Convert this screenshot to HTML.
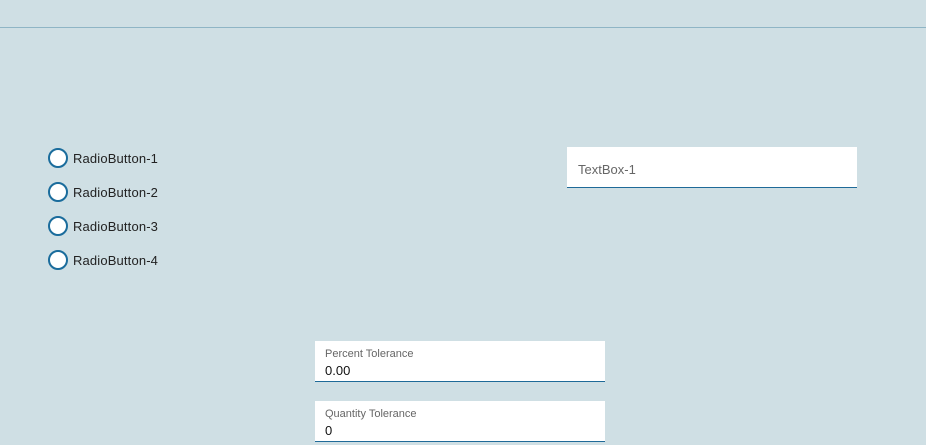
<!DOCTYPE html>
<html><head><style>
body{margin:0;width:926px;height:445px;background:#cfdfe4;font-family:"Liberation Sans",sans-serif;position:relative;overflow:hidden}
.line{position:absolute;left:0;top:27px;width:926px;height:1px;background:#8fb5c5}
.r{position:absolute;left:48px;height:20px;font-size:13px;color:#222;line-height:20px}
.r i{position:absolute;left:0;top:0;width:16px;height:16px;border:2px solid #1a6c9c;border-radius:50%;background:#fff}
.r span{position:absolute;left:25px;top:1px;white-space:nowrap;letter-spacing:0.15px}
.box{position:absolute;background:#fff;border-bottom:1px solid #1f6a98;box-sizing:border-box}
.lab{position:absolute;left:10px;top:7px;font-size:11px;color:#666}
.val{position:absolute;left:10px;top:22px;font-size:13px;color:#111}
</style></head><body>
<div class="line"></div>
<div class="r" style="top:148px"><i></i><span>RadioButton-1</span></div>
<div class="r" style="top:182px"><i></i><span>RadioButton-2</span></div>
<div class="r" style="top:216px"><i></i><span>RadioButton-3</span></div>
<div class="r" style="top:250px"><i></i><span>RadioButton-4</span></div>
<div class="box" style="left:567px;top:147px;width:290px;height:41px"><div style="position:absolute;left:11px;top:15px;font-size:13px;color:#666">TextBox-1</div></div>
<div class="box" style="left:315px;top:341px;width:290px;height:41px"><div class="lab">Percent Tolerance</div><div class="val">0.00</div></div>
<div class="box" style="left:315px;top:401px;width:290px;height:41px"><div class="lab">Quantity Tolerance</div><div class="val">0</div></div>
</body></html>
